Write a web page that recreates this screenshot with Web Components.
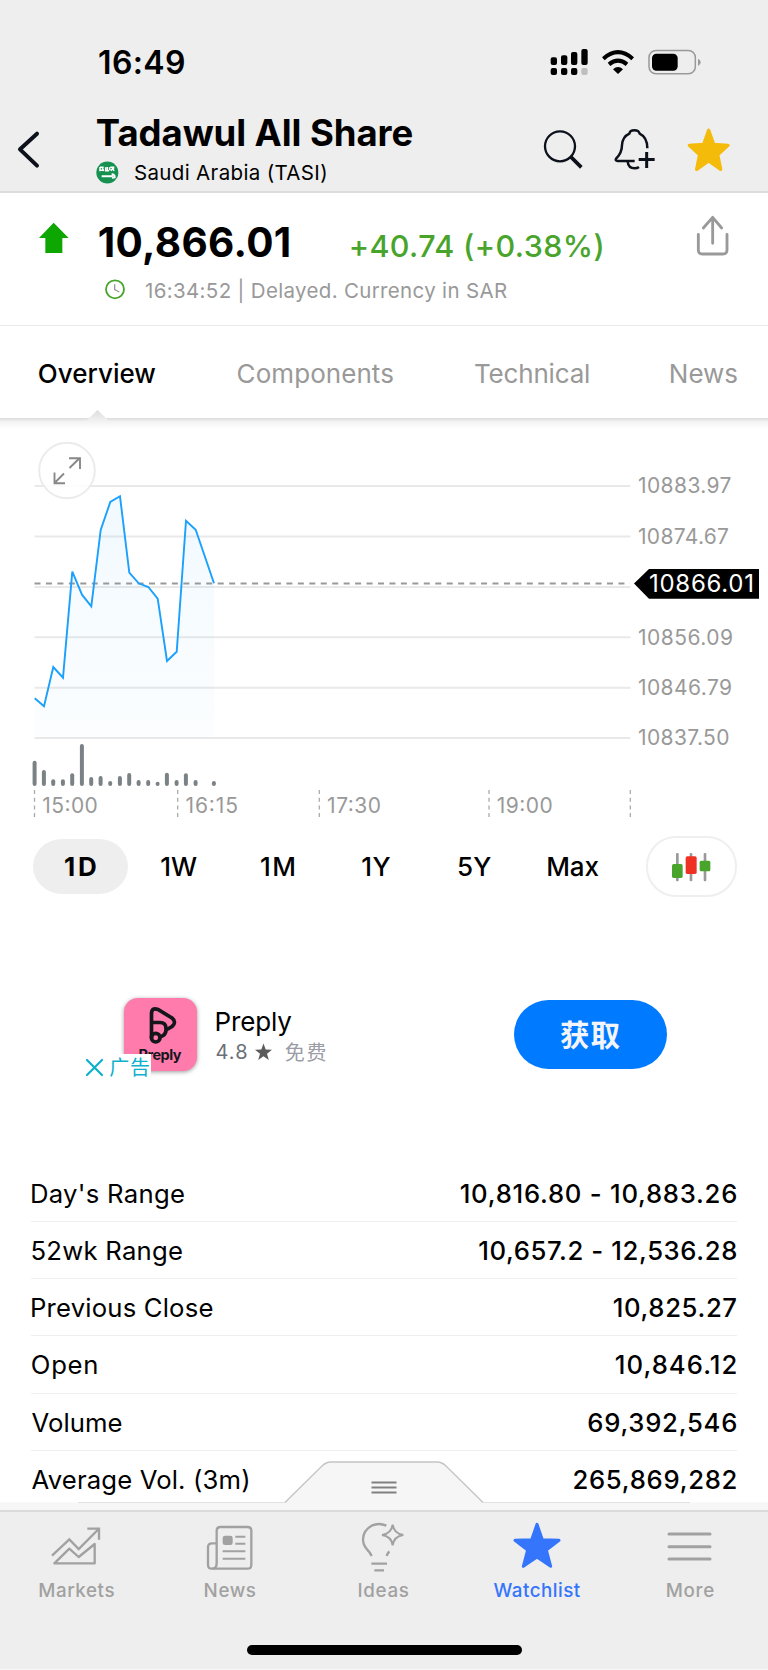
<!DOCTYPE html>
<html lang="en">
<head>
<meta charset="utf-8">
<meta name="viewport" content="width=device-width, initial-scale=1">
<title>Tadawul All Share</title>
<style>
    body {
        margin: 0;
        width: 768px;
        height: 1670px;
        overflow: hidden;
        background: #fff;
        color: #000;
        font-family: Inter, "Noto Sans CJK SC", sans-serif;
    }
</style>
</head>
<body>
<quote-page></quote-page>

<script>
// Text whose inked width is fixed: the rest is spread as letter spacing.
class FitText extends HTMLElement {
    connectedCallback() {
        if (!this.shadowRoot) {
            this.attachShadow({ mode: 'open' });
            this.shadowRoot.innerHTML = `
                <style>
                    :host { display: block; white-space: nowrap; flex: none; }
                    span { display: inline-block; }
                </style>
                <span><slot></slot></span>
            `;
        }
        const width = parseFloat(this.getAttribute('w'));
        const text = this.textContent;
        const style = getComputedStyle(this);
        // Side bearings are read at ten times the size, as the canvas rounds them
        const ctx = document.createElement('canvas').getContext('2d');
        ctx.font = `${style.fontWeight} ${parseFloat(style.fontSize) * 10}px ${style.fontFamily}`;
        const m = ctx.measureText(text);
        const left = -m.actualBoundingBoxLeft / 10;
        const right = (m.width - m.actualBoundingBoxRight) / 10;
        const span = this.shadowRoot.querySelector('span');
        const ink = span.getBoundingClientRect().width - left - right;
        this.style.width = width + 'px';
        span.style.letterSpacing = (width - ink) / (text.length - 1) + 'px';
        span.style.marginLeft = -left + 'px';
    }
}

class StatusBar extends HTMLElement {
    constructor() {
        super();
        this.attachShadow({ mode: 'open' });
        this.shadowRoot.innerHTML = `
            <style>
                :host {
                    display: flex;
                    align-items: flex-start;
                    gap: 10px;
                    height: 112px;
                    box-sizing: border-box;
                    padding: 43px 66px 0 99px;
                    background: #eee;
                }
                fit-text { font-size: 32px; font-weight: 600; line-height: 39px; margin-right: auto; }
                svg { margin-top: 3px; }
            </style>
            <fit-text w="85">16:49</fit-text>
            <svg width="42" height="32" viewBox="84 48 126 96">
                <rect x="92" y="82" width="19" height="23" rx="6"/>
                <rect x="123" y="76" width="19" height="29" rx="6"/>
                <rect x="153" y="66" width="19" height="39" rx="6"/>
                <rect x="184" y="57" width="19" height="48" rx="6"/>
                <rect x="92" y="114" width="19" height="21" rx="6"/>
                <rect x="123" y="114" width="19" height="21" rx="6"/>
                <rect x="153" y="114" width="19" height="21" rx="6"/>
                <rect x="184" y="114" width="19" height="21" rx="6" fill="#bebebe"/>
            </svg>
            <svg width="36" height="32" viewBox="240 48 108 96" fill="none" stroke="#000" stroke-width="12">
                <path d="M250 86 Q294 47 338 86"/>
                <path d="M267 103 Q294 81 321 103"/>
                <path d="M294 132 L279 118 Q294 104 309 118 Z" fill="#000" stroke="none"/>
            </svg>
            <svg width="56" height="32" viewBox="378 48 168 96">
                <rect x="387" y="61.500" width="139" height="70" rx="21" fill="none" stroke="#999" stroke-width="4.500"/>
                <rect x="396" y="71" width="77" height="51" rx="13"/>
                <path d="M534 86 Q542 90 542 97 Q542 104 534 108 Z" fill="#999"/>
            </svg>
        `;
    }
}

class InstrumentHeader extends HTMLElement {
    constructor() {
        super();
        this.attachShadow({ mode: 'open' });
        this.shadowRoot.innerHTML = `
            <style>
                :host {
                    display: flex;
                    align-items: flex-start;
                    height: 81px;
                    box-sizing: border-box;
                    padding: 0 34px 0 14px;
                    background: #eee;
                    border-bottom: 2px solid #dcdcdc;
                }
                .back { margin-top: 16px; }
                .names { margin-left: 54px; flex: 1; }
                .title { font-size: 36.500px; font-weight: 700; line-height: 42px; margin-left: 1px; }
                .market { display: flex; align-items: center; gap: 16px; margin-top: 6px; }
                .market fit-text { font-size: 20.500px; line-height: 25px; }
                .actions { display: flex; gap: 25px; margin-top: 13px; }
            </style>
            <svg class="back" width="28" height="44" viewBox="42 294 84 132" fill="none" stroke="#0c111b" stroke-width="12" stroke-linecap="round" stroke-linejoin="round">
                <path d="M111 311 L60 358 L111 407"/>
            </svg>
            <div class="names">
                <fit-text class="title" w="315">Tadawul All Share</fit-text>
                <div class="market">
                    <svg width="23" height="23" viewBox="0 0 69 69">
                        <circle cx="34" cy="34.500" r="33" fill="#169150"/>
                        <path d="M12 18 v13 M12 19 h11 M13 28 h9 M18 18 l5 12 M29 19 v10 h10 M34 18 v9 M41 19 v9 M43 19 h12 M44 29 l10 -9 M49 20 l5 10" stroke="#fff" stroke-width="4.500" fill="none"/>
                        <path d="M17 46 H50 M47 40 q10 0 9 9 l-8 1" stroke="#fff" stroke-width="6" fill="none"/>
                    </svg>
                    <fit-text w="190.500">Saudi Arabia (TASI)</fit-text>
                </div>
            </div>
            <div class="actions">
                <svg width="46" height="50" viewBox="60 285 138 150" fill="none" stroke="#0c111b">
                    <circle cx="120" cy="349" r="45" stroke-width="7"/>
                    <path d="M151 379 L184 412" stroke-width="11"/>
                </svg>
                <svg width="48" height="50" viewBox="277 285 144 150" fill="none" stroke="#0c111b" stroke-width="7.500" stroke-linejoin="round">
                    <path d="M348 393 H296 Q288 392 293 385 Q310 368 310 345 Q312 320 332 311 Q334 301 347 301 Q360 301 363 311 Q386 322 386 355"/>
                    <path d="M327 395 Q329 415 348 415 Q356 415 361 411"/>
                    <path d="M384 366 V414 M360 388.500 H408" stroke-width="9"/>
                </svg>
                <svg width="50" height="50" viewBox="492 285 150 150">
                    <path d="M566 301 L581 343 L624 346 L593 374 L602 418 L566 393 L530 418 L539 374 L508 346 L551 343 Z" fill="#f4bb0a" stroke="#f4bb0a" stroke-width="10" stroke-linejoin="round"/>
                </svg>
            </div>
        `;
    }
}

class QuoteSummary extends HTMLElement {
    constructor() {
        super();
        this.attachShadow({ mode: 'open' });
        this.shadowRoot.innerHTML = `
            <style>
                :host {
                    display: flex;
                    align-items: flex-start;
                    height: 133px;
                    box-sizing: border-box;
                    padding: 0 36px 0 36px;
                    border-bottom: 1px solid #ececec;
                }
                .arrow { margin-top: 25px; }
                .main { flex: 1; padding: 28px 0 0 27px; }
                .prices { display: flex; align-items: baseline; height: 44px; }
                .price { font-size: 40.500px; font-weight: 700; line-height: 44px; }
                .change { font-size: 30.500px; font-weight: 500; line-height: 44px; color: #49a42c; margin-left: 62px; }
                .time { display: flex; align-items: center; gap: 20px; margin: 13px 0 0 5px; color: #999; }
                .time svg { margin-top: -2px; }
                .time fit-text { font-size: 20.500px; line-height: 26px; }
                .share { margin-top: 20px; }
            </style>
            <svg class="arrow" width="36" height="38" viewBox="108 69 108 114" fill="#0ea600">
                <path d="M161 83 L206 129 H187 V174 H136 V129 H117 Z"/>
            </svg>
            <div class="main">
                <div class="prices">
                    <fit-text class="price" w="190">10,866.01</fit-text>
                    <fit-text class="change" w="251">+40.74 (+0.38%)</fit-text>
                </div>
                <div class="time">
                    <svg width="22" height="22" viewBox="311 250 66 66" fill="none" stroke-width="5.500">
                        <circle cx="344" cy="281" r="27" stroke="#49a42c"/>
                        <path d="M343 266 V282 L357 289" stroke="#999" stroke-width="4"/>
                    </svg>
                    <fit-text w="360.500">16:34:52 | Delayed. Currency in SAR</fit-text>
                </div>
            </div>
            <svg class="share" width="38" height="46" viewBox="882 54 114 138" fill="none" stroke="#999" stroke-width="8.500" stroke-linecap="round" stroke-linejoin="round">
                <path d="M895 118 V165 Q895 177 907 177 H969 Q981 177 981 165 V118"/>
                <path d="M938 145 V67 M910 99 L938 67 L965 99"/>
            </svg>
        `;
    }
}

class SectionTabs extends HTMLElement {
    constructor() {
        super();
        this.attachShadow({ mode: 'open' });
        this.shadowRoot.innerHTML = `
            <style>
                :host { display: block; }
                nav {
                    display: flex;
                    align-items: center;
                    gap: 82.300px;
                    height: 82px;
                    box-sizing: border-box;
                    padding: 13px 0 0 39px;
                    font-size: 26px;
                    line-height: 36px;
                    color: #999;
                }
                .active { color: #000; font-weight: 500; }
                svg { display: block; }
            </style>
            <nav>
                <fit-text class="active" w="116.500">Overview</fit-text>
                <fit-text w="155">Components</fit-text>
                <fit-text w="113.500">Technical</fit-text>
                <fit-text w="66">News</fit-text>
            </nav>
            <svg width="768" height="22" viewBox="0 0 768 22">
                <defs>
                    <linearGradient id="edge" x1="0" y1="0" x2="0" y2="1">
                        <stop offset="0" stop-color="#dedede"/>
                        <stop offset=".2" stop-color="#e6e6e6"/>
                        <stop offset=".25" stop-color="#f1f1f1"/>
                        <stop offset="1" stop-color="#fff"/>
                    </linearGradient>
                    <linearGradient id="notch" x1="0" y1="0" x2="0" y2="1">
                        <stop offset="0" stop-color="#dcdcdc"/>
                        <stop offset=".8" stop-color="#fbfbfb"/>
                        <stop offset="1" stop-color="#fff"/>
                    </linearGradient>
                </defs>
                <rect y="10" width="768" height="11" fill="url(#edge)"/>
                <path d="M87 12 L97.500 2 L108 12 L105 22 H90 Z" fill="url(#notch)"/>
            </svg>
        `;
    }
}

class PriceChart extends HTMLElement {
    constructor() {
        super();
        this.attachShadow({ mode: 'open' });

        const points = [
            [34.7, 268.3], [44, 276.3], [53.3, 237], [63, 247.7], [72.3, 141.7], [82, 164.7], [91.3, 176.3],
            [100.7, 100], [110.3, 72], [120, 66.3], [129.3, 142.7], [138.7, 153.3], [148.3, 157], [157.7, 168.7],
            [167, 231], [176.7, 221.7], [186, 90.7], [195.7, 99.7], [214, 153.3]
        ];
        const volume = [25.3, 16, 6.7, 6.7, 12.7, 42, 9, 10, 5, 10, 13, 6, 6, 4.3, 13.3, 6, 12.7, 6, 5];
        const levels = [
            [56, '10883.97', 92], [106.5, '10874.67', 89.5], [157, '', 0],
            [207.3, '10856.09', 93.5], [257.7, '10846.79', 92.5], [308, '10837.50', 90]
        ];
        const ticks = [
            [34.5, '15:00', 54], [177.7, '16:15', 51], [319.3, '17:30', 52.5], [489, '19:00', 54.5], [630.3, '', 0]
        ];

        const line = points.map(p => p.join(' ')).join(' L');
        const grid = levels.map(([y]) => `<path d="M34.500 ${y} H630.500"/>`).join('');
        const prices = levels.filter(l => l[1]).map(([y, label, w]) =>
            `<text x="638" y="${y + 7.3}" textLength="${w + 1.5}">${label}</text>`).join('');
        const bars = volume.map((h, i) =>
            `<rect x="${points[i][0] - 2.1}" y="${356 - h}" width="4" height="${h}" rx="2"/>`).join('');
        const marks = ticks.map(([x]) => `<path d="M${x} 360 V387.500"/>`).join('');
        const hours = ticks.filter(t => t[1]).map(([x, label, w]) =>
            `<text x="${x + 7.8}" y="383" textLength="${w + 1.5}">${label}</text>`).join('');

        this.shadowRoot.innerHTML = `
            <style>
                :host { display: block; height: 396px; }
                svg { display: block; }
                text { font-size: 21px; fill: #999; }
                .tag { font-size: 24px; fill: #fff; }
            </style>
            <svg width="768" height="396" viewBox="0 0 768 396" fill="none">
                <defs>
                    <linearGradient id="area" x1="0" y1="0" x2="0" y2="1">
                        <stop offset="0" stop-color="#1ba0fb" stop-opacity=".06"/>
                        <stop offset="1" stop-color="#1ba0fb" stop-opacity=".015"/>
                    </linearGradient>
                </defs>
                <g stroke="#e9e9e9" stroke-width="2">${grid}</g>
                <path d="M${line} V308 H34.700 Z" fill="url(#area)"/>
                <path d="M34.500 153.500 H630" stroke="#999" stroke-width="2" stroke-dasharray="6 5.450"/>
                <path d="M${line}" stroke="#1ba0fb" stroke-width="1.900"/>
                <circle cx="67" cy="40.500" r="27.800" fill="#fff" fill-opacity=".85" stroke="#ebebeb" stroke-width="1.900"/>
                <path d="M69.500 38 L80 27.700 M69 28.200 H80 V39 M64 43.500 L54.500 53 M54.500 42.500 V53.200 H65" stroke="#888" stroke-width="1.900"/>
                ${prices}
                <path d="M634 153.500 L649 139 H759 V168.700 H649 Z" fill="#000"/>
                <text class="tag" x="649" y="162.200" textLength="105">10866.01</text>
                <g fill="#7b8286">${bars}</g>
                <g stroke="#aaa" stroke-width="1.300" stroke-dasharray="4 3.700">${marks}</g>
                ${hours}
            </svg>
        `;
    }
}

class RangePicker extends HTMLElement {
    constructor() {
        super();
        this.attachShadow({ mode: 'open' });
        this.shadowRoot.innerHTML = `
            <style>
                :host {
                    display: flex;
                    align-items: center;
                    height: 81px;
                    box-sizing: border-box;
                    padding: 0 31px 0 31px;
                    font-size: 26px;
                    font-weight: 500;
                    line-height: 55.700px;
                }
                .cell { width: 98.600px; display: flex; justify-content: center; }
                .pill {
                    width: 95px;
                    display: flex;
                    justify-content: center;
                    background: #eee;
                    border-radius: 30px / 28px;
                    font-weight: 700;
                }
                .candles {
                    margin-left: auto;
                    width: 91px;
                    height: 60.500px;
                    box-sizing: border-box;
                    border: 2px solid #efefef;
                    border-radius: 30px;
                    display: flex;
                    align-items: center;
                    justify-content: center;
                }
                .candles svg { margin-left: -1px; }
            </style>
            <div class="cell"><div class="pill"><fit-text w="31">1D</fit-text></div></div>
            <div class="cell"><fit-text w="35.500">1W</fit-text></div>
            <div class="cell"><fit-text w="33.500">1M</fit-text></div>
            <div class="cell"><fit-text w="28">1Y</fit-text></div>
            <div class="cell"><fit-text w="32">5Y</fit-text></div>
            <div class="cell"><fit-text w="50">Max</fit-text></div>
            <div class="candles">
                <svg width="40" height="30" viewBox="694 1233 120 90">
                    <g fill="#999">
                        <rect x="709" y="1236" width="8" height="85" rx="3"/>
                        <rect x="750" y="1236" width="8" height="85" rx="3"/>
                        <rect x="792" y="1236" width="8" height="85" rx="3"/>
                    </g>
                    <rect x="697" y="1269" width="32" height="42" rx="5" fill="#49a42c"/>
                    <rect x="738" y="1246" width="33" height="53" rx="5" fill="#ef3124"/>
                    <rect x="780" y="1259" width="32" height="32" rx="5" fill="#49a42c"/>
                </svg>
            </div>
        `;
    }
}

class AdBanner extends HTMLElement {
    constructor() {
        super();
        this.attachShadow({ mode: 'open' });
        this.shadowRoot.innerHTML = `
            <style>
                :host {
                    display: flex;
                    align-items: flex-start;
                    height: 257.500px;
                    box-sizing: border-box;
                    padding: 91px 101.500px 0 124px;
                }
                .app {
                    position: relative;
                    width: 73px;
                    height: 73px;
                    border-radius: 14px;
                    background: #ff7bac;
                    box-shadow: 0 1px 4px rgba(0, 0, 0, .4);
                }
                .app > svg { display: block; }
                .app text { font-size: 14.500px; font-weight: 700; }
                .badge {
                    position: absolute;
                    left: -42px;
                    top: 56px;
                    width: 69px;
                    height: 26px;
                    display: flex;
                    align-items: center;
                    gap: 6px;
                    padding-left: 3px;
                    box-sizing: border-box;
                    background: #fff;
                    color: #0fb0cc;
                    font-family: "Noto Sans CJK SC", sans-serif;
                    font-size: 20px;
                    line-height: 26px;
                }
                .info { padding: 8px 0 0 19.500px; flex: 1; }
                .name { font-size: 26px; line-height: 31px; }
                .meta { display: flex; align-items: center; margin-top: 2px; color: #6b6f76; font-size: 20px; line-height: 26px; }
                .meta svg { margin: 0 13px 0 7px; }
                .free { color: #9b9ca5; font-family: "Noto Sans CJK SC", sans-serif; }
                button {
                    margin: 1.500px 0 0;
                    width: 153px;
                    height: 69px;
                    border: 0;
                    padding: 0;
                    border-radius: 35px;
                    background: #007aff;
                    color: #f3f5fb;
                    font: 700 29.500px/67px "Noto Sans CJK SC", sans-serif;
                    display: flex;
                    align-items: flex-start;
                    justify-content: center;
                }
            </style>
            <div class="app">
                <svg width="73" height="73" viewBox="0 0 73 73" fill="none" stroke="#15161c" stroke-width="3.700">
                    <path d="M27.500 40 V16 Q27.500 9 34 11.500 L48 20 Q53 24 48 28.500 L42 32"/>
                    <path d="M28 24.500 H36 Q42 24.500 42 30.500 V32 Q42 37.500 35.500 39"/>
                    <circle cx="31.700" cy="39.700" r="4.300"/>
                    <text x="14.500" y="62.300" textLength="43" fill="#15161c" stroke="none">Preply</text>
                </svg>
                <div class="badge">
                    <svg width="19" height="19" viewBox="0 0 19 19" fill="none" stroke="#0fb0cc" stroke-width="2.200" stroke-linecap="round">
                        <path d="M2 2 L17 17 M17 2 L2 17"/>
                    </svg>
                    <fit-text w="39">广告</fit-text>
                </div>
            </div>
            <div class="info">
                <fit-text class="name" w="75">Preply</fit-text>
                <div class="meta">
                    <fit-text w="30">4.8</fit-text>
                    <svg width="19" height="18" viewBox="0 0 19 18"><path d="M9.500 .5 L11.700 6.500 L18 6.700 L13 10.700 L14.800 17 L9.500 13.300 L4.200 17 L6 10.700 L1 6.700 L7.300 6.500 Z" fill="#5c5c5c"/></svg>
                    <fit-text class="free" w="40">免费</fit-text>
                </div>
            </div>
            <button><fit-text w="59">获取</fit-text></button>
        `;
    }
}

class StatRow extends HTMLElement {
    constructor() {
        super();
        this.attachShadow({ mode: 'open' });
        this.shadowRoot.innerHTML = `
            <style>
                :host {
                    display: flex;
                    justify-content: space-between;
                    height: 57.300px;
                    box-sizing: border-box;
                    margin: 0 31px;
                    padding: 0 1px;
                    border-bottom: 1px solid #efefef;
                    font-size: 25.700px;
                    line-height: 57px;
                }
            </style>
            <slot></slot>
            <slot name="value"></slot>
        `;
    }
}

class StatTable extends HTMLElement {
    constructor() {
        super();
        this.attachShadow({ mode: 'open' });
        const rows = [
            ["Day's Range", 152, '10,816.80 - 10,883.26', 275.5],
            ['52wk Range', 150, '10,657.2 - 12,536.28', 257],
            ['Previous Close', 180.5, '10,825.27', 122.5],
            ['Open', 64.5, '10,846.12', 120.5],
            ['Volume', 89.5, '69,392,546', 147.5],
            ['Average Vol. (3m)', 216, '265,869,282', 162]
        ];
        this.shadowRoot.innerHTML = `
            <style>
                :host { display: block; height: 338px; overflow: hidden; }
                fit-text[slot=value] { font-weight: 500; }
            </style>
            ${rows.map(([label, lw, value, vw]) => `
                <stat-row>
                    <fit-text w="${lw}">${label}</fit-text>
                    <fit-text slot="value" w="${vw}">${value}</fit-text>
                </stat-row>
            `).join('')}
        `;
    }
}

class PullHandle extends HTMLElement {
    constructor() {
        super();
        this.attachShadow({ mode: 'open' });
        // Pulled up over the last table row
        this.shadowRoot.innerHTML = `
            <style>
                :host { display: block; position: relative; margin-top: -42.500px; height: 50px; }
                svg { display: block; }
            </style>
            <svg width="768" height="50" viewBox="0 0 768 50" fill="none">
                <path d="M0 50 V42.500 H285 L322 6 Q326 2 331 2 H437 Q442 2 446 6 L483 42.500 H768 V50 Z" fill="#f6f6f6"/>
                <path d="M78 42.500 H285 M483 42.500 H690" stroke="#e2e2e2"/>
                <path d="M285 42.500 L322 6 Q326 2 331 2 H437 Q442 2 446 6 L483 42.500" stroke="#c4c4c4" stroke-width="1.300"/>
                <path d="M371.500 22.500 H396.500 M371.500 27.500 H396.500 M371.500 32.500 H396.500" stroke="#808080" stroke-width="2"/>
            </svg>
        `;
    }
}

class TabItem extends HTMLElement {
    constructor() {
        super();
        this.attachShadow({ mode: 'open' });
        this.shadowRoot.innerHTML = `
            <style>
                :host {
                    flex: 1;
                    display: flex;
                    flex-direction: column;
                    align-items: center;
                    gap: 6.500px;
                    color: #a1a1a1;
                    font-size: 18.800px;
                    font-weight: 500;
                    line-height: 24px;
                }
                :host([active]) { color: #3475fb; }
            </style>
            <slot name="icon"></slot>
            <slot></slot>
        `;
    }
}

class TabBar extends HTMLElement {
    constructor() {
        super();
        this.attachShadow({ mode: 'open' });
        this.shadowRoot.innerHTML = `
            <style>
                :host {
                    display: block;
                    height: 160px;
                    box-sizing: border-box;
                    border-top: 2px solid #dadada;
                    border-bottom: 1px solid #f8f8f8;
                    background: #eee;
                }
                nav { display: flex; margin-right: 1px; padding-top: 6px; height: 127px; }
                svg { fill: none; stroke: currentColor; stroke-width: 7px; }
                .home { width: 275px; height: 10px; border-radius: 5px; margin: 0 auto; background: #000; }
            </style>
            <nav>
                <tab-item>
                    <svg slot="icon" width="60" height="54" viewBox="140 54 180 162" stroke-linejoin="round">
                        <path d="M155 167 L207 118 L235 147 L295 87 M261 86 H296 V119" stroke-linejoin="miter"/>
                        <path d="M162 190 L207 146 L235 171 L283 132 V190 Z"/>
                    </svg>
                    <fit-text w="74">Markets</fit-text>
                </tab-item>
                <tab-item>
                    <svg slot="icon" width="60" height="54" viewBox="601 54 180 162">
                        <path d="M651 191 V92 Q651 81 662 81 H744 Q755 81 755 92 V194 Q755 206 743 206 H637 Q625 206 625 194 V142 Q625 130 637 130 H651"/>
                        <path d="M651 190 Q651 206 638 206"/>
                        <path d="M707 110 H737 M707 131 H737 M669 154 H737 M669 176 H737" stroke-width="6"/>
                        <rect x="669" y="107" width="30" height="28" rx="7" fill="currentColor" stroke="none"/>
                    </svg>
                    <fit-text w="50">News</fit-text>
                </tab-item>
                <tab-item>
                    <svg slot="icon" width="60" height="54" viewBox="1061 54 180 162">
                        <path d="M1158 77 Q1136 67 1114 77 Q1089 90 1088 118 Q1088 135 1100 148 Q1110 158 1114 168 M1167 154 Q1161 160 1159 168"/>
                        <path d="M1177 74 Q1181 101 1209 105 Q1181 109 1177 136 Q1173 109 1145 105 Q1173 101 1177 74 Z" stroke-width="6"/>
                        <path d="M1113 191 H1160 M1122 211 H1151"/>
                    </svg>
                    <fit-text w="49">Ideas</fit-text>
                </tab-item>
                <tab-item active>
                    <svg slot="icon" width="60" height="54" viewBox="322 54 180 162" stroke-linejoin="round">
                        <path d="M412 73 L428 119 L478 121 L440 150 L453 199 L412 171 L371 199 L384 150 L346 121 L396 119 Z" fill="currentColor" stroke-width="9"/>
                    </svg>
                    <fit-text w="86">Watchlist</fit-text>
                </tab-item>
                <tab-item>
                    <svg slot="icon" width="60" height="54" viewBox="781 54 180 162" stroke-linecap="round">
                        <path d="M808 102 H931 M808 140 H931 M808 177 H931" stroke-width="9"/>
                    </svg>
                    <fit-text w="46">More</fit-text>
                </tab-item>
            </nav>
            <div class="home"></div>
        `;
    }
}

class QuotePage extends HTMLElement {
    constructor() {
        super();
        this.attachShadow({ mode: 'open' });
        this.shadowRoot.innerHTML = `
            <style>
                :host { display: block; width: 768px; }
            </style>
            <status-bar></status-bar>
            <instrument-header></instrument-header>
            <quote-summary></quote-summary>
            <section-tabs></section-tabs>
            <price-chart></price-chart>
            <range-picker></range-picker>
            <ad-banner></ad-banner>
            <stat-table></stat-table>
            <pull-handle></pull-handle>
            <tab-bar></tab-bar>
        `;
    }
}

// Containers first, so that the text is measured once its final font applies
customElements.define('quote-page', QuotePage);
customElements.define('status-bar', StatusBar);
customElements.define('instrument-header', InstrumentHeader);
customElements.define('quote-summary', QuoteSummary);
customElements.define('section-tabs', SectionTabs);
customElements.define('price-chart', PriceChart);
customElements.define('range-picker', RangePicker);
customElements.define('ad-banner', AdBanner);
customElements.define('stat-table', StatTable);
customElements.define('stat-row', StatRow);
customElements.define('pull-handle', PullHandle);
customElements.define('tab-bar', TabBar);
customElements.define('tab-item', TabItem);
customElements.define('fit-text', FitText);
</script>
</body>
</html>
